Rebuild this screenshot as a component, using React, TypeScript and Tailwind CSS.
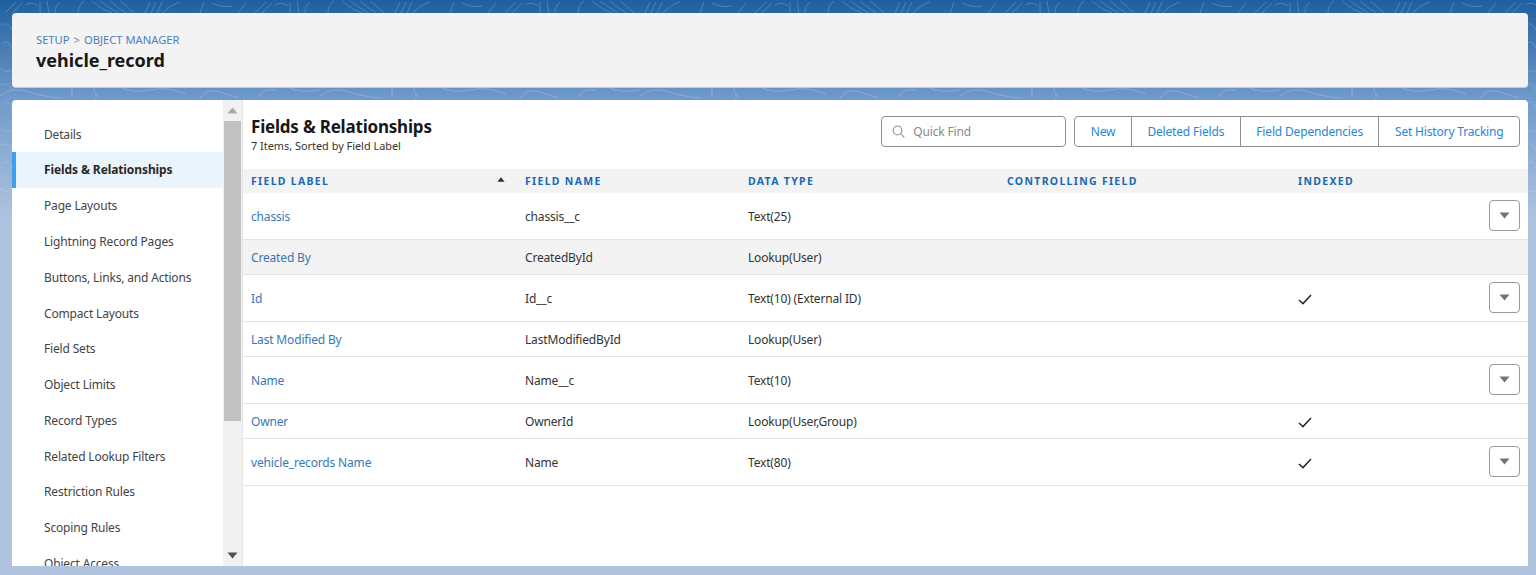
const navItems = [
  'Details',
  'Fields & Relationships',
  'Page Layouts',
  'Lightning Record Pages',
  'Buttons, Links, and Actions',
  'Compact Layouts',
  'Field Sets',
  'Object Limits',
  'Record Types',
  'Related Lookup Filters',
  'Restriction Rules',
  'Scoping Rules',
  'Object Access',
];

const rows = [
  { label: 'chassis', name: 'chassis__c', type: 'Text(25)', indexed: false, action: true },
  { label: 'Created By', name: 'CreatedById', type: 'Lookup(User)', indexed: false, action: false, shaded: true },
  { label: 'Id', name: 'Id__c', type: 'Text(10) (External ID)', indexed: true, action: true },
  { label: 'Last Modified By', name: 'LastModifiedById', type: 'Lookup(User)', indexed: false, action: false },
  { label: 'Name', name: 'Name__c', type: 'Text(10)', indexed: false, action: true },
  { label: 'Owner', name: 'OwnerId', type: 'Lookup(User,Group)', indexed: true, action: false },
  { label: 'vehicle_records Name', name: 'Name', type: 'Text(80)', indexed: true, action: true },
];

const columns = ['Field Label', 'Field Name', 'Data Type', 'Controlling Field', 'Indexed'];
const toolbar = ['New', 'Deleted Fields', 'Field Dependencies', 'Set History Tracking'];

function Check() {
  return (
    <svg width="14" height="11" viewBox="0 0 14 11" fill="none">
      <path d="M1 6l4 3.6L13 1" stroke="#2b2826" strokeWidth="1.5" />
    </svg>
  );
}

function Caret({ up, color, size = 11 }: { up?: boolean; color: string; size?: number }) {
  return (
    <svg width={size} height={(size * 7) / 11} viewBox="0 0 11 7">
      <path d={up ? 'M5.5 0.5L10.5 6.5H0.5z' : 'M0.5 0.5H10.5L5.5 6.5z'} fill={color} />
    </svg>
  );
}

// faint contour lines in the page background
function Topo() {
  return (
    <svg className="absolute inset-0 h-full w-full" width="1536" height="575">
      <defs>
        <pattern id="strip" width="250" height="13" patternUnits="userSpaceOnUse">
          <path
            d="M5 13L16 2M12 13L22 3M25 5Q32 1 38 6M40 2V13M47 1L49 13M55 13Q55 6 60 2M78 13Q78 5 84 1M92 1Q102 10 112 13M100 1Q110 8 118 13M110 1Q118 8 126 13M120 1Q128 7 134 13M145 13L150 2M151 13L156 2M157 13L162 2M163 13Q170 5 180 2M200 13L204 2M212 3Q222 8 232 6M238 13L246 3"
            fill="none"
            stroke="#fff"
            strokeOpacity="0.2"
          />
        </pattern>
        <pattern id="curves" width="320" height="14" patternUnits="userSpaceOnUse">
          <path
            d="M0 12Q12 2 30 8T62 14M72 14V2M96 0Q90 8 100 14M118 2Q132 10 150 6T186 10M200 14Q206 4 220 8T238 14M258 14Q262 4 276 6M286 2Q298 10 320 6"
            fill="none"
            stroke="#fff"
            strokeOpacity="0.2"
          />
        </pattern>
        <pattern id="side" width="12" height="60" patternUnits="userSpaceOnUse">
          <path d="M0 8Q6 14 12 10M0 26Q7 20 12 30M2 44Q8 38 12 48" fill="none" stroke="#fff" strokeOpacity="0.16" />
        </pattern>
      </defs>
      <rect x="0" y="0" width="1536" height="13" fill="url(#strip)" />
      <rect x="0" y="87" width="1536" height="14" fill="url(#curves)" />
      <rect x="0" y="13" width="12" height="190" fill="url(#side)" />
      <rect x="1528" y="13" width="8" height="190" fill="url(#side)" />
    </svg>
  );
}

export default function App() {
  return (
    <div className="relative h-[575px] overflow-hidden bg-gradient-to-b from-[#1d5f9f] via-[#6f9ac9] via-[17%] to-[#afc3df] to-[38%] pl-3 pr-2 pt-[13px] font-['Noto_Sans',sans-serif] text-[12px] tracking-[-0.17px] text-[#181818]">
      <Topo />
      <header className="relative h-[75px] rounded border-b border-[#c9c9c9] bg-[#f3f3f3] pl-6 pt-[19px]">
        <p className="flex gap-1 text-[11.2px] leading-4 tracking-normal text-[#4a82bd]">
          <span>SETUP</span>
          <span className="text-[#6f7f90]">&gt;</span>
          <span>OBJECT MANAGER</span>
        </p>
        <h1 className="text-[18px] font-bold leading-6 tracking-normal text-[#181818]">vehicle_record</h1>
      </header>

      <main className="relative mt-3 flex h-[466px] overflow-hidden rounded-t bg-white">
        <nav className="w-[211px] shrink-0 overflow-hidden pt-4">
          {navItems.map((item) => {
            const active = item === 'Fields & Relationships';
            return (
              <div
                key={item}
                className={
                  active
                    ? 'flex h-[35.75px] items-center border-l-4 border-[#3d9ff0] bg-[#eaf4fd] pl-7 font-bold tracking-[-0.1px] text-[#2b2826]'
                    : 'flex h-[35.75px] items-center pl-8 pt-0.5 text-[#444]'
                }
              >
                {item}
              </div>
            );
          })}
        </nav>

        <div className="flex w-[20px] shrink-0 flex-col border-r border-[#e5e5e5] bg-[#f1f1f1]">
          <div className="flex h-[21px] items-center justify-center">
            <Caret up color="#a8a8a8" />
          </div>
          <div className="mx-px h-[300px] bg-[#c1c1c1]" />
          <div className="mt-auto flex h-[21px] items-center justify-center">
            <Caret color="#505050" />
          </div>
        </div>

        <section className="min-w-0 flex-1">
          <div className="flex h-[69px] items-start justify-between pl-2 pr-2 pt-[16px]">
            <div>
              <h2 className="text-[17px] font-bold leading-[22px] tracking-[-0.2px]">Fields &amp; Relationships</h2>
              <p className="text-[10.9px] leading-[15px] tracking-normal text-[#333]">7 Items, Sorted by Field Label</p>
            </div>
            <div className="flex items-center gap-2">
              <div className="flex h-[31px] w-[185px] items-center gap-2 rounded border border-[#8f8f8f] pl-2.5 text-[#8a8a8a]">
                <svg width="13" height="13" viewBox="0 0 13 13" fill="none" stroke="#a0a0a0" strokeWidth="1.3">
                  <circle cx="5.5" cy="5.5" r="4.3" />
                  <path d="M8.6 8.6l3.6 3.6" />
                </svg>
                Quick Find
              </div>
              <div className="flex h-[31px] rounded border border-[#8f8f8f] text-[#2a86d6]">
                {toolbar.map((label) => (
                  <div key={label} className="flex items-center border-l border-[#8f8f8f] px-[15.5px] first:border-l-0">
                    {label}
                  </div>
                ))}
              </div>
            </div>
          </div>

          <div className="grid h-6 grid-cols-[274px_223px_259px_291px_1fr] items-center bg-[#f3f3f3] pl-2 pt-0.5 text-[10.5px] font-bold uppercase tracking-[1.3px] text-[#1a68b3]">
            {columns.map((col, i) => (
              <div key={col} className="flex items-center justify-between">
                {col}
                {i === 0 && (
                  <span className="mb-1 mr-[20px]">
                    <Caret up color="#24344f" size={8} />
                  </span>
                )}
              </div>
            ))}
          </div>

          {rows.map((row) => (
            <div
              key={row.label}
              className={`grid grid-cols-[274px_223px_259px_291px_1fr] items-center border-b border-[#e5e5e5] pl-2 ${
                row.action ? 'h-[46.5px]' : 'h-[35.5px]'
              } ${row.shaded ? 'bg-[#f3f3f3]' : ''}`}
            >
              <div className="pt-0.5 text-[#3a76b4]">{row.label}</div>
              <div className="pt-0.5 text-[#333]">{row.name}</div>
              <div className="pt-0.5 text-[#333]">{row.type}</div>
              <div />
              <div className="flex items-center justify-between pr-2">
                <span className="pt-1">{row.indexed && <Check />}</span>
                {row.action && (
                  <button className="flex h-[31px] w-[31px] items-center justify-center rounded border border-[#9a9a9a] bg-white">
                    <Caret color="#747474" />
                  </button>
                )}
              </div>
            </div>
          ))}
        </section>
      </main>
    </div>
  );
}
